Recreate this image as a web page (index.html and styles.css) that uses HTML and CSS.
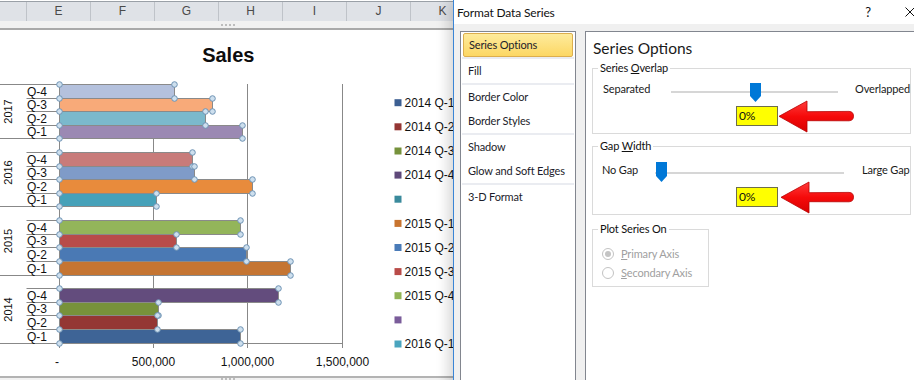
FILE: index.html
```html
<!DOCTYPE html>
<html>
<head>
<meta charset="utf-8">
<title>Format Data Series</title>
<link rel="stylesheet" href="styles.css">
</head>
<body>
<div class="app">
  <div class="sheet">
    <div class="colheader">
      <div class="col col-d"></div>
      <div class="col">E</div>
      <div class="col">F</div>
      <div class="col">G</div>
      <div class="col">H</div>
      <div class="col">I</div>
      <div class="col">J</div>
      <div class="col">K</div>
    </div>
    <div class="splitter splitter-top"><span class="grip"></span></div>
    <div class="chartarea">
      <svg class="chart" width="453" height="346" viewBox="0 30 453 346" xmlns="http://www.w3.org/2000/svg">
        <text class="title" x="228.3" y="61.5" text-anchor="middle">Sales</text>
        <g class="axis">
          <line x1="153.5" y1="84" x2="153.5" y2="348"/>
          <line x1="247.5" y1="84" x2="247.5" y2="348"/>
          <line x1="342.5" y1="84" x2="342.5" y2="348"/>
          <line x1="59.5" y1="84" x2="59.5" y2="348"/>
          <line x1="0" y1="343.5" x2="342.5" y2="343.5"/>
          <line x1="0" y1="84.5" x2="59.5" y2="84.5"/>
          <line x1="0" y1="138.5" x2="59.5" y2="138.5"/>
          <line x1="0" y1="206.5" x2="59.5" y2="206.5"/>
          <line x1="0" y1="275.5" x2="59.5" y2="275.5"/>
          <line x1="26.5" y1="98.5" x2="59.5" y2="98.5"/>
          <line x1="26.5" y1="111.5" x2="59.5" y2="111.5"/>
          <line x1="26.5" y1="125.5" x2="59.5" y2="125.5"/>
          <line x1="26.5" y1="152.5" x2="59.5" y2="152.5"/>
          <line x1="26.5" y1="166.5" x2="59.5" y2="166.5"/>
          <line x1="26.5" y1="179.5" x2="59.5" y2="179.5"/>
          <line x1="26.5" y1="193.5" x2="59.5" y2="193.5"/>
          <line x1="26.5" y1="220.5" x2="59.5" y2="220.5"/>
          <line x1="26.5" y1="234.5" x2="59.5" y2="234.5"/>
          <line x1="26.5" y1="247.5" x2="59.5" y2="247.5"/>
          <line x1="26.5" y1="261.5" x2="59.5" y2="261.5"/>
          <line x1="26.5" y1="288.5" x2="59.5" y2="288.5"/>
          <line x1="26.5" y1="302.5" x2="59.5" y2="302.5"/>
          <line x1="26.5" y1="315.5" x2="59.5" y2="315.5"/>
          <line x1="26.5" y1="329.5" x2="59.5" y2="329.5"/>
        </g>
        <g class="bars">
          <rect x="59.5" y="84.5" width="115" height="14" fill="#b4c1dd"/>
          <rect x="59.5" y="98.5" width="153" height="13" fill="#f8aa79"/>
          <rect x="59.5" y="111.5" width="146" height="14" fill="#7bb9cc"/>
          <rect x="59.5" y="125.5" width="183" height="13" fill="#9b89b3"/>
          <rect x="59.5" y="152.5" width="133" height="14" fill="#c87b7a"/>
          <rect x="59.5" y="166.5" width="135" height="13" fill="#7f9bc8"/>
          <rect x="59.5" y="179.5" width="193" height="14" fill="#e88b3c"/>
          <rect x="59.5" y="193.5" width="97" height="13" fill="#46a1b9"/>
          <rect x="59.5" y="220.5" width="181" height="14" fill="#93b55a"/>
          <rect x="59.5" y="234.5" width="117" height="13" fill="#b84c4a"/>
          <rect x="59.5" y="247.5" width="187" height="14" fill="#4a79b4"/>
          <rect x="59.5" y="261.5" width="231" height="14" fill="#c57532"/>
          <rect x="59.5" y="288.5" width="219" height="14" fill="#634c7d"/>
          <rect x="59.5" y="302.5" width="99" height="13" fill="#77923b"/>
          <rect x="59.5" y="315.5" width="98" height="14" fill="#943734"/>
          <rect x="59.5" y="329.5" width="181" height="14" fill="#3e6496"/>
        </g>
        <g class="handles">
          <circle cx="59.5" cy="84.5" r="2.8"/><circle cx="59.5" cy="98.5" r="2.8"/>
          <circle cx="59.5" cy="111.5" r="2.8"/><circle cx="59.5" cy="125.5" r="2.8"/>
          <circle cx="59.5" cy="138.5" r="2.8"/><circle cx="59.5" cy="152.5" r="2.8"/>
          <circle cx="59.5" cy="166.5" r="2.8"/><circle cx="59.5" cy="179.5" r="2.8"/>
          <circle cx="59.5" cy="193.5" r="2.8"/><circle cx="59.5" cy="206.5" r="2.8"/>
          <circle cx="59.5" cy="220.5" r="2.8"/><circle cx="59.5" cy="234.5" r="2.8"/>
          <circle cx="59.5" cy="247.5" r="2.8"/><circle cx="59.5" cy="261.5" r="2.8"/>
          <circle cx="59.5" cy="275.5" r="2.8"/><circle cx="59.5" cy="288.5" r="2.8"/>
          <circle cx="59.5" cy="302.5" r="2.8"/><circle cx="59.5" cy="315.5" r="2.8"/>
          <circle cx="59.5" cy="329.5" r="2.8"/><circle cx="59.5" cy="343.5" r="2.8"/>
          <circle cx="174.5" cy="84.5" r="2.8"/><circle cx="174.5" cy="98.5" r="2.8"/>
          <circle cx="212.5" cy="98.5" r="2.8"/><circle cx="212.5" cy="111.5" r="2.8"/>
          <circle cx="205.5" cy="111.5" r="2.8"/><circle cx="205.5" cy="125.5" r="2.8"/>
          <circle cx="242.5" cy="125.5" r="2.8"/><circle cx="242.5" cy="138.5" r="2.8"/>
          <circle cx="192.5" cy="152.5" r="2.8"/><circle cx="192.5" cy="166.5" r="2.8"/>
          <circle cx="194.5" cy="166.5" r="2.8"/><circle cx="194.5" cy="179.5" r="2.8"/>
          <circle cx="252.5" cy="179.5" r="2.8"/><circle cx="252.5" cy="193.5" r="2.8"/>
          <circle cx="156.5" cy="193.5" r="2.8"/><circle cx="156.5" cy="206.5" r="2.8"/>
          <circle cx="240.5" cy="220.5" r="2.8"/><circle cx="240.5" cy="234.5" r="2.8"/>
          <circle cx="176.5" cy="234.5" r="2.8"/><circle cx="176.5" cy="247.5" r="2.8"/>
          <circle cx="246.5" cy="247.5" r="2.8"/><circle cx="246.5" cy="261.5" r="2.8"/>
          <circle cx="290.5" cy="261.5" r="2.8"/><circle cx="290.5" cy="275.5" r="2.8"/>
          <circle cx="278.5" cy="288.5" r="2.8"/><circle cx="278.5" cy="302.5" r="2.8"/>
          <circle cx="158.5" cy="302.5" r="2.8"/><circle cx="158.5" cy="315.5" r="2.8"/>
          <circle cx="157.5" cy="315.5" r="2.8"/><circle cx="157.5" cy="329.5" r="2.8"/>
          <circle cx="240.5" cy="329.5" r="2.8"/><circle cx="240.5" cy="343.5" r="2.8"/>
        </g>
        <g class="lbl">
          <text x="27" y="95.8">Q-4</text>
          <text x="27" y="109.3">Q-3</text>
          <text x="27" y="122.8">Q-2</text>
          <text x="27" y="136.3">Q-1</text>
          <text x="27" y="163.8">Q-4</text>
          <text x="27" y="177.3">Q-3</text>
          <text x="27" y="190.8">Q-2</text>
          <text x="27" y="204.3">Q-1</text>
          <text x="27" y="231.8">Q-4</text>
          <text x="27" y="245.3">Q-3</text>
          <text x="27" y="258.8">Q-2</text>
          <text x="27" y="272.8">Q-1</text>
          <text x="27" y="299.8">Q-4</text>
          <text x="27" y="313.3">Q-3</text>
          <text x="27" y="326.8">Q-2</text>
          <text x="27" y="340.8">Q-1</text>
        </g>
        <g class="year">
          <text transform="translate(11.8 111.5) rotate(-90)" text-anchor="middle">2017</text>
          <text transform="translate(11.8 172.5) rotate(-90)" text-anchor="middle">2016</text>
          <text transform="translate(11.8 241) rotate(-90)" text-anchor="middle">2015</text>
          <text transform="translate(11.8 309.5) rotate(-90)" text-anchor="middle">2014</text>
        </g>
        <g class="lbl" text-anchor="middle">
          <text x="57" y="366">-</text>
          <text x="153.5" y="366">500,000</text>
          <text x="247.5" y="366">1,000,000</text>
          <text x="342.5" y="366">1,500,000</text>
        </g>
        <g class="legend">
          <rect x="394.5" y="99.2" width="7" height="7" fill="#3c5f92"/><text x="404.5" y="107">2014 Q-1</text>
          <rect x="394.5" y="123.3" width="7" height="7" fill="#943634"/><text x="404.5" y="131.1">2014 Q-2</text>
          <rect x="394.5" y="147.5" width="7" height="7" fill="#76923c"/><text x="404.5" y="155.3">2014 Q-3</text>
          <rect x="394.5" y="171.6" width="7" height="7" fill="#5f497a"/><text x="404.5" y="179.4">2014 Q-4</text>
          <rect x="394.5" y="195.7" width="7" height="7" fill="#3a8a9c"/>
          <rect x="394.5" y="219.9" width="7" height="7" fill="#c8742f"/><text x="404.5" y="227.7">2015 Q-1</text>
          <rect x="394.5" y="244" width="7" height="7" fill="#4a7bb8"/><text x="404.5" y="251.8">2015 Q-2</text>
          <rect x="394.5" y="268.1" width="7" height="7" fill="#b94b48"/><text x="404.5" y="275.9">2015 Q-3</text>
          <rect x="394.5" y="292.2" width="7" height="7" fill="#92b556"/><text x="404.5" y="300">2015 Q-4</text>
          <rect x="394.5" y="316.4" width="7" height="7" fill="#7a5c9a"/>
          <rect x="394.5" y="340.5" width="7" height="7" fill="#4aa5bf"/><text x="404.5" y="348.3">2016 Q-1</text>
        </g>
      </svg>
    </div>
    <div class="splitter splitter-bottom"><span class="grip"></span></div>
  </div>

  <div class="dialog">
    <div class="titlebar">
      <span class="dtitle">Format Data Series</span>
      <span class="help">?</span>
      <span class="close"><svg width="10" height="10" viewBox="0 0 10 10"><path d="M0.5 0.5 L9.5 9.5 M9.5 0.5 L0.5 9.5" stroke="#111" stroke-width="1"/></svg></span>
    </div>
    <div class="dbody">
      <div class="nav">
        <div class="nav-item sel">Series Options</div>
        <div class="nav-sep"></div>
        <div class="nav-item">Fill</div>
        <div class="nav-sep"></div>
        <div class="nav-item">Border Color</div>
        <div class="nav-item">Border Styles</div>
        <div class="nav-sep"></div>
        <div class="nav-item">Shadow</div>
        <div class="nav-item">Glow and Soft Edges</div>
        <div class="nav-sep"></div>
        <div class="nav-item">3-D Format</div>
      </div>
      <div class="panel">
        <div class="heading">Series Options</div>

        <fieldset class="group g-overlap">
          <legend>Series <u>O</u>verlap</legend>
          <div class="srow srow-overlap">
            <span class="lab lab-sep">Separated</span>
            <div class="track track-overlap">
              <svg class="thumb thumb-overlap" width="11" height="19" viewBox="0 0 11 19"><polygon points="0,0 11,0 11,13 5.5,19 0,13" fill="#0078d7"/></svg>
            </div>
            <span class="lab lab-right lab-over">Overlapped</span>
          </div>
          <div class="vrow">
            <span class="pct">0%</span>
            <svg class="arrow" width="76" height="33" viewBox="0 0 76 33">
              <defs>
                <linearGradient id="ar1" x1="0" y1="0" x2="0" y2="1">
                  <stop offset="0" stop-color="#ff3b3b"/>
                  <stop offset="0.5" stop-color="#f50a0a"/>
                  <stop offset="1" stop-color="#d80000"/>
                </linearGradient>
              </defs>
              <path d="M1,16.3 L29,1 L29,11.7 L71,11.4 Q75.5,11.6 75.5,16.1 Q75.5,20.6 71,20.8 L29,20.7 L29,32 Z" fill="url(#ar1)" stroke="#b80000" stroke-width="0.8" stroke-linejoin="round"/>
            </svg>
          </div>
        </fieldset>

        <fieldset class="group g-gap">
          <legend>Gap <u>W</u>idth</legend>
          <div class="srow srow-gap">
            <span class="lab lab-nogap">No Gap</span>
            <div class="track track-gap">
              <svg class="thumb thumb-gap" width="11" height="20" viewBox="0 0 11 20"><polygon points="0,0 11,0 11,14 5.5,20 0,14" fill="#0078d7"/></svg>
            </div>
            <span class="lab lab-right lab-large">Large Gap</span>
          </div>
          <div class="vrow vrow-gap">
            <span class="pct">0%</span>
            <svg class="arrow arrow-gap" width="76" height="33" viewBox="0 0 76 33">
              <defs>
                <linearGradient id="ar2" x1="0" y1="0" x2="0" y2="1">
                  <stop offset="0" stop-color="#ff3b3b"/>
                  <stop offset="0.5" stop-color="#f50a0a"/>
                  <stop offset="1" stop-color="#d80000"/>
                </linearGradient>
              </defs>
              <path d="M1,16.3 L29,1 L29,11.7 L69,11.4 Q73.5,11.6 73.5,16.1 Q73.5,20.6 69,20.8 L29,20.7 L29,32 Z" fill="url(#ar2)" stroke="#b80000" stroke-width="0.8" stroke-linejoin="round"/>
            </svg>
          </div>
        </fieldset>

        <fieldset class="group g-plot">
          <legend>Plot Series On</legend>
          <div class="radio-row"><span class="radio checked"></span><span class="rlab"><u>P</u>rimary Axis</span></div>
          <div class="radio-row"><span class="radio"></span><span class="rlab"><u>S</u>econdary Axis</span></div>
        </fieldset>
      </div>
    </div>
  </div>
</div>
</body>
</html>
```

FILE: styles.css
```css
* { box-sizing: border-box; }

html, body {
  margin: 0;
  padding: 0;
  background: #ffffff;
}

body {
  width: 914px;
  height: 380px;
  overflow: hidden;
}

.app {
  display: flex;
  width: 914px;
  height: 380px;
  overflow: hidden;
}

/* ---------- spreadsheet side ---------- */
.sheet {
  flex: 0 0 453px;
  width: 453px;
  display: flex;
  flex-direction: column;
  overflow: hidden;
}

.colheader {
  display: flex;
  height: 21px;
  margin-top: 1px;
  flex: 0 0 20px;
  border-top: 1px solid #9aa0a7;
  background: #dfe2e7;
  font-family: "Liberation Sans", Arial, sans-serif;
  font-size: 12px;
  color: #4a4a4a;
}

.col {
  flex: 0 0 64px;
  width: 64px;
  border-right: 1px solid #bfc3c9;
  text-align: center;
  line-height: 19px;
}

.col-d {
  flex: 0 0 27px;
  width: 27px;
}

.splitter {
  background: #f1f1f1;
}

.splitter-top {
  flex: 0 0 9px;
  height: 9px;
  border-bottom: 2px solid #a9a9a9;
  padding-top: 3px;
}

.splitter-bottom {
  flex: 0 0 4px;
  height: 4px;
  border-top: 2px solid #b3b3b3;
}

.grip {
  display: block;
  width: 16px;
  height: 2px;
  margin-left: 221px;
  background: repeating-linear-gradient(90deg, #bdbdbd 0 2px, transparent 2px 4px);
}

.chartarea {
  flex: 0 0 346px;
  height: 346px;
  background: #ffffff;
}

.chart {
  display: block;
  font-family: "Liberation Sans", Arial, sans-serif;
}

.chart .title {
  font-size: 20px;
  font-weight: bold;
  fill: #0d0d0d;
}

.chart .axis line {
  stroke: #888888;
  stroke-width: 1;
}

.chart .bars rect {
  stroke: #8a8a8a;
  stroke-width: 1;
}

.chart .handles circle {
  fill: #cddfee;
  stroke: #6f93b4;
  stroke-width: 1;
}

.chart .lbl text,
.chart .legend text {
  font-size: 12px;
  fill: #111111;
}

.chart .year text {
  font-size: 11px;
  fill: #111111;
}

/* ---------- dialog ---------- */
.dialog {
  flex: 0 0 480px;
  width: 480px;
  height: 392px;
  border-left: 1px solid #3a85d6;
  box-shadow: -5px 0 12px rgba(0, 0, 0, 0.16);
  background: #f0f0f0;
  display: flex;
  flex-direction: column;
  font-family: Lato, "Noto Sans", sans-serif;
  font-size: 11px;
  letter-spacing: -0.15px;
  color: #1a1a1a;
}

.titlebar {
  flex: 0 0 24px;
  height: 24px;
  display: flex;
  align-items: center;
  background: #ffffff;
  font-size: 12px;
  color: #111111;
}

.dtitle {
  flex: 1;
  padding-left: 3px;
}

.help {
  width: 38px;
  text-align: center;
  font-size: 13px;
}

.close {
  width: 46px;
  display: flex;
  justify-content: center;
  align-items: center;
}

.close svg {
  display: block;
}

.dbody {
  flex: 1;
  display: flex;
  padding: 7px 0 0 6px;
}

.nav {
  flex: 0 0 116px;
  width: 116px;
  background: #ffffff;
  border: 1px solid #82868f;
  padding: 1px;
}

.nav-item {
  height: 24px;
  line-height: 24px;
  padding-left: 6px;
  white-space: nowrap;
  color: #1c1c2a;
}

.nav-item.sel {
  margin: 0 1px;
  padding-left: 5px;
  line-height: 22px;
  border: 1px solid #dcae4e;
  border-radius: 2px;
  background: linear-gradient(#feeb9c, #fcd764);
}

.nav-sep {
  height: 2px;
  background: #eaecf1;
}

.panel {
  flex: 1;
  margin-left: 9px;
  background: #ffffff;
  border: 1px solid #82868f;
  padding-left: 6px;
}

.heading {
  margin-top: 6px;
  height: 20px;
  line-height: 20px;
  font-size: 15.5px;
  letter-spacing: 0;
  color: #1a1a1a;
  padding-left: 1px;
}

.group {
  margin: 0;
  padding: 0;
  border: 1px solid #dadada;
  min-width: 0;
  width: 319px;
}

.group legend {
  margin-left: 5px;
  padding: 0 2px;
  height: 14px;
  line-height: 14px;
  font-size: 11px;
  color: #111111;
}

.g-overlap {
  margin-top: 3px;
  padding-bottom: 1px;
}

.g-gap {
  margin-top: 5px;
  padding-bottom: 1px;
}

.g-plot {
  margin-top: 7px;
  width: 117px;
  padding-bottom: 4px;
}

.srow {
  display: flex;
  align-items: center;
  height: 18px;
  white-space: nowrap;
}

.srow > * {
  flex-shrink: 0;
}

.srow-overlap {
  margin-top: 4px;
  padding-left: 10px;
}

.srow-gap {
  margin-top: 7px;
  padding-left: 9px;
}

.lab-sep { width: 68px; }
.lab-nogap { width: 53px; }

.track {
  position: relative;
  height: 18px;
}

.track::before {
  content: "";
  position: absolute;
  left: 0;
  right: 0;
  top: 12px;
  height: 2px;
  background: #d6d6d6;
}

.track-overlap { width: 167px; }
.track-gap { width: 189px; }

.thumb {
  position: absolute;
  display: block;
}

.thumb-overlap { left: 79px; top: 4px; }
.thumb-gap { left: 1px; top: 2px; }

.lab-over { margin-left: 17px; }
.lab-large { margin-left: 18px; }

.vrow {
  display: flex;
  align-items: center;
  height: 32px;
  margin-top: 3px;
  padding-left: 143px;
}

.vrow > * {
  flex-shrink: 0;
}

.vrow-gap {
  margin-top: 3px;
}

.pct {
  width: 42px;
  height: 20px;
  line-height: 18px;
  border: 1px solid #6e6e4a;
  background: #ffff00;
  padding-left: 2px;
  font-size: 12px;
  color: #111111;
}

.arrow {
  display: block;
}

.arrow-gap {
  margin-left: 2px;
}

.radio-row {
  display: flex;
  align-items: center;
  height: 19px;
  padding-left: 9px;
  white-space: nowrap;
}

.radio-row:first-of-type {
  margin-top: 8px;
}

.radio {
  flex-shrink: 0;
  width: 12px;
  height: 12px;
  border: 1px solid #c3c3c3;
  border-radius: 50%;
  background: #ffffff;
  display: flex;
  align-items: center;
  justify-content: center;
}

.radio.checked::after {
  content: "";
  width: 6px;
  height: 6px;
  border-radius: 50%;
  background: #c4c4c4;
}

.rlab {
  margin-left: 7px;
  color: #a0a0a0;
}
```
